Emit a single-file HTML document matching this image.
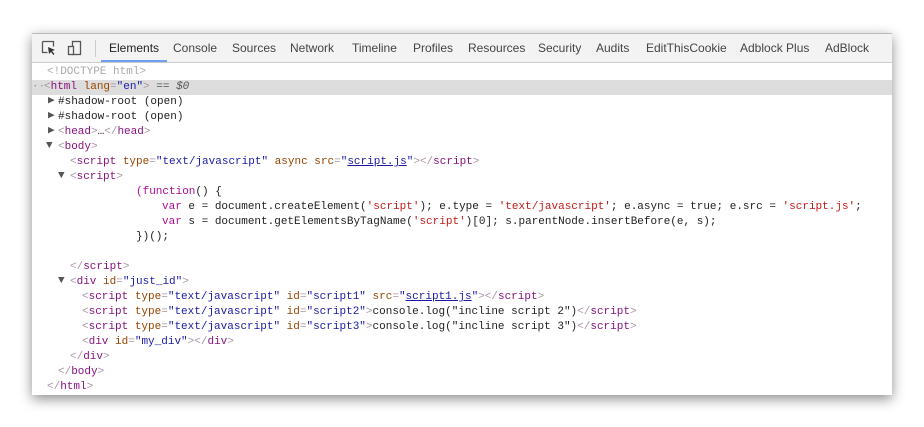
<!DOCTYPE html>
<html><head><style>
body{margin:0;width:924px;height:427px;background:#fff;position:relative;overflow:hidden}
#p{position:absolute;left:32px;top:33px;width:860px;height:361px;background:#fff;box-shadow:0 4px 12px rgba(0,0,0,.45);border-top:1px solid #bbb}
#bar{position:absolute;left:0;top:0;width:860px;height:28px;background:#f3f3f3;border-bottom:1px solid #ccc}
.t{position:absolute;top:7px;font:12px "Liberation Sans",sans-serif;color:#444}
#c{position:absolute;left:0;top:31px;width:860px;font:11px/15px "Liberation Mono",monospace;color:#222}
.l{position:relative;height:15px;white-space:pre}
.l span.x{position:absolute}
.tg{color:#881280}.tb{color:#a894a6}.an{color:#994500}.av{color:#1a1aa6}.cm{color:#aaa}.k{color:#aa0d91}.s{color:#c41a16}.u{color:#1a1aa6;text-decoration:underline}
.tri{position:absolute;font-size:11px;color:#555;top:-1px}
</style></head><body>
<div id="p">
<div id="bar">
<svg style="position:absolute;left:9px;top:6px" width="16" height="16"><path d="M1.5 1.5h11v5M1.5 1.5v11h5" fill="none" stroke="#555" stroke-width="1.3"/><path d="M7 7l7 3-3 1 2.5 3-1 1-2.5-3-2 2z" fill="#333"/></svg>
<svg style="position:absolute;left:35px;top:6px" width="16" height="17"><rect x="5.5" y="1.5" width="8" height="13" fill="none" stroke="#555" stroke-width="1.3"/><rect x="1.5" y="6.5" width="5" height="8" fill="#f3f3f3" stroke="#555" stroke-width="1.3"/></svg>
<div style="position:absolute;left:63px;top:6px;width:1px;height:17px;background:#ccc"></div>
<div class="t" style="left:77px;color:#222">Elements</div>
<div style="position:absolute;left:69px;top:26px;width:66px;height:2px;background:#6e9ef0"></div>
<div class="t" style="left:141px">Console</div>
<div class="t" style="left:200px">Sources</div>
<div class="t" style="left:258px">Network</div>
<div class="t" style="left:320px">Timeline</div>
<div class="t" style="left:381px">Profiles</div>
<div class="t" style="left:436px">Resources</div>
<div class="t" style="left:506px">Security</div>
<div class="t" style="left:564px">Audits</div>
<div class="t" style="left:614px">EditThisCookie</div>
<div class="t" style="left:708px">Adblock Plus</div>
<div class="t" style="left:793px">AdBlock</div>
</div>
<div id="c">
<div class="l"><span class="x cm" style="left:15px">&lt;!DOCTYPE html&gt;</span></div>
<div class="l" style="background:#ddd"><span class="x" style="left:0;color:#999">··</span><span class="x" style="left:12px"><span class="tb">&lt;</span><span class="tg">html</span> <span class="an">lang</span><span class="tb">=</span><span class="av">"en"</span><span class="tb">&gt;</span> <span style="color:#555">== <i>$0</i></span></span></div>
<div class="l"><span class="tri" style="left:16px">▶</span><span class="x" style="left:26px">#shadow-root (open)</span></div>
<div class="l"><span class="tri" style="left:16px">▶</span><span class="x" style="left:26px">#shadow-root (open)</span></div>
<div class="l"><span class="tri" style="left:16px">▶</span><span class="x" style="left:26px"><span class="tb">&lt;</span><span class="tg">head</span><span class="tb">&gt;</span>…<span class="tb">&lt;/</span><span class="tg">head</span><span class="tb">&gt;</span></span></div>
<div class="l"><span class="tri" style="left:14px">▼</span><span class="x" style="left:26px"><span class="tb">&lt;</span><span class="tg">body</span><span class="tb">&gt;</span></span></div>
<div class="l"><span class="x" style="left:38px"><span class="tb">&lt;</span><span class="tg">script</span> <span class="an">type</span><span class="tb">=</span><span class="av">"text/javascript"</span> <span class="an">async</span> <span class="an">src</span><span class="tb">=</span><span class="av">"</span><span class="u">script.js</span><span class="av">"</span><span class="tb">&gt;&lt;/</span><span class="tg">script</span><span class="tb">&gt;</span></span></div>
<div class="l"><span class="tri" style="left:26px">▼</span><span class="x" style="left:38px"><span class="tb">&lt;</span><span class="tg">script</span><span class="tb">&gt;</span></span></div>
<div class="l"><span class="x" style="left:104px"><span class="k">(function</span>() {</span></div>
<div class="l"><span class="x" style="left:130px"><span class="k">var</span> e = document.createElement(<span class="s">'script'</span>); e.type = <span class="s">'text/javascript'</span>; e.async = true; e.src = <span class="s">'script.js'</span>;</span></div>
<div class="l"><span class="x" style="left:130px"><span class="k">var</span> s = document.getElementsByTagName(<span class="s">'script'</span>)[0]; s.parentNode.insertBefore(e, s);</span></div>
<div class="l"><span class="x" style="left:104px">})();</span></div>
<div class="l"></div>
<div class="l"><span class="x" style="left:38px"><span class="tb">&lt;/</span><span class="tg">script</span><span class="tb">&gt;</span></span></div>
<div class="l"><span class="tri" style="left:26px">▼</span><span class="x" style="left:38px"><span class="tb">&lt;</span><span class="tg">div</span> <span class="an">id</span><span class="tb">=</span><span class="av">"just_id"</span><span class="tb">&gt;</span></span></div>
<div class="l"><span class="x" style="left:50px"><span class="tb">&lt;</span><span class="tg">script</span> <span class="an">type</span><span class="tb">=</span><span class="av">"text/javascript"</span> <span class="an">id</span><span class="tb">=</span><span class="av">"script1"</span> <span class="an">src</span><span class="tb">=</span><span class="av">"</span><span class="u">script1.js</span><span class="av">"</span><span class="tb">&gt;&lt;/</span><span class="tg">script</span><span class="tb">&gt;</span></span></div>
<div class="l"><span class="x" style="left:50px"><span class="tb">&lt;</span><span class="tg">script</span> <span class="an">type</span><span class="tb">=</span><span class="av">"text/javascript"</span> <span class="an">id</span><span class="tb">=</span><span class="av">"script2"</span><span class="tb">&gt;</span>console.log("incline script 2")<span class="tb">&lt;/</span><span class="tg">script</span><span class="tb">&gt;</span></span></div>
<div class="l"><span class="x" style="left:50px"><span class="tb">&lt;</span><span class="tg">script</span> <span class="an">type</span><span class="tb">=</span><span class="av">"text/javascript"</span> <span class="an">id</span><span class="tb">=</span><span class="av">"script3"</span><span class="tb">&gt;</span>console.log("incline script 3")<span class="tb">&lt;/</span><span class="tg">script</span><span class="tb">&gt;</span></span></div>
<div class="l"><span class="x" style="left:50px"><span class="tb">&lt;</span><span class="tg">div</span> <span class="an">id</span><span class="tb">=</span><span class="av">"my_div"</span><span class="tb">&gt;&lt;/</span><span class="tg">div</span><span class="tb">&gt;</span></span></div>
<div class="l"><span class="x" style="left:38px"><span class="tb">&lt;/</span><span class="tg">div</span><span class="tb">&gt;</span></span></div>
<div class="l"><span class="x" style="left:26px"><span class="tb">&lt;/</span><span class="tg">body</span><span class="tb">&gt;</span></span></div>
<div class="l"><span class="x" style="left:15px"><span class="tb">&lt;/</span><span class="tg">html</span><span class="tb">&gt;</span></span></div>
</div>
</div>
</body></html>
